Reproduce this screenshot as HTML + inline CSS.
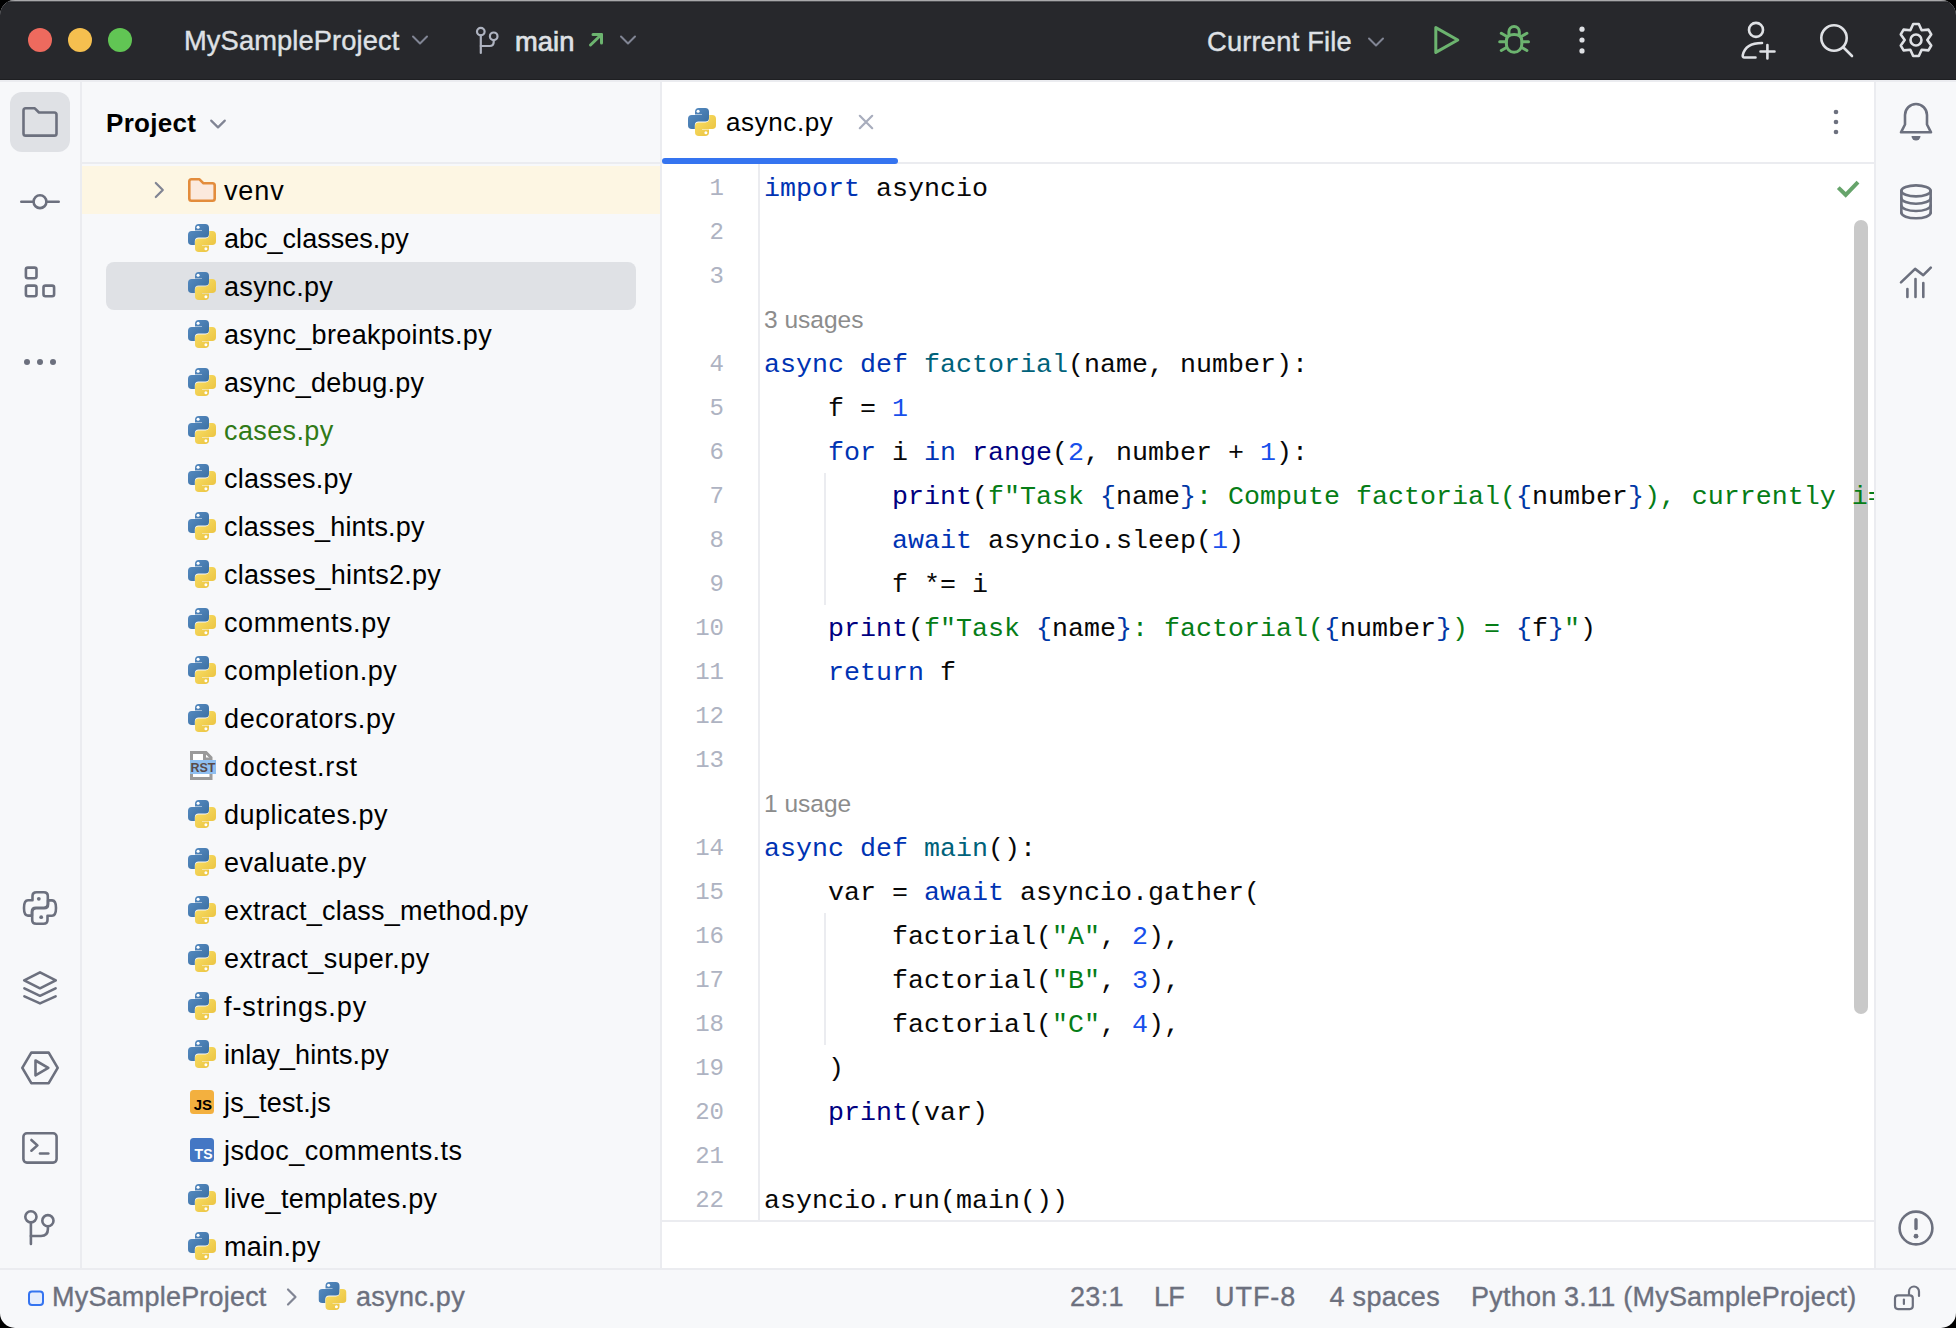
<!DOCTYPE html>
<html><head><meta charset="utf-8"><style>
*{margin:0;padding:0;box-sizing:border-box}
html,body{width:1956px;height:1328px;overflow:hidden;background:#000}
body{font-family:"Liberation Sans", sans-serif;position:relative}
.win{position:absolute;left:0;top:0;width:1956px;height:1328px;border-radius:15px;overflow:hidden;background:#f7f8fa}
.abs{position:absolute}
.t{position:absolute;white-space:pre;font-family:"Liberation Sans", sans-serif}
.code{position:absolute;white-space:pre;font-family:"Liberation Mono", monospace;font-size:26.67px;line-height:44px;color:#080808}
.ln{position:absolute;white-space:pre;font-family:"Liberation Mono", monospace;font-size:24px;line-height:44px;color:#aeb3c2;text-align:right;width:60px}
.kw{color:#0033b3} .fn{color:#00627a} .num{color:#1750eb} .str{color:#067d17} .bi{color:#000080} .br{color:#0037a6}
.rowt{position:absolute;left:224px;font-size:27px;line-height:48px;color:#000;white-space:pre}
.ov{position:absolute;left:0;top:0;width:1956px;height:1328px;overflow:visible}
</style></head>
<body><div class="win">
<div class="abs" style="left:0;top:0;width:1956px;height:80px;background:#27282c"></div>
<div class="abs" style="left:0;top:79px;width:1956px;height:1px;background:#1e1f22"></div>
<div class="abs" style="left:0;top:0;width:1956px;height:1px;background:#a9a9ab"></div>
<div class="abs" style="left:0;top:1px;width:1956px;height:1px;background:#4e4f53"></div>
<div class="abs" style="left:0;top:2px;width:1956px;height:1px;background:#222327"></div>
<div class="abs" style="left:28px;top:28px;width:24px;height:24px;border-radius:50%;background:#ee6a5e"></div>
<div class="abs" style="left:68px;top:28px;width:24px;height:24px;border-radius:50%;background:#f5bf4f"></div>
<div class="abs" style="left:108px;top:28px;width:24px;height:24px;border-radius:50%;background:#61c554"></div>
<div class="t" style="left:184px;top:21px;font-size:27.3px;line-height:40px;color:#dfe1e5;letter-spacing:0.1px;-webkit-text-stroke:0.4px #dfe1e5">MySampleProject</div>
<div class="t" style="left:515px;top:21.5px;font-size:27.3px;line-height:40px;color:#dfe1e5;letter-spacing:0.1px;-webkit-text-stroke:0.7px #dfe1e5">main</div>
<div class="t" style="left:1207px;top:21.5px;font-size:27.3px;line-height:40px;color:#dfe1e5;letter-spacing:0.2px;-webkit-text-stroke:0.4px #dfe1e5">Current File</div>
<div class="abs" style="left:0;top:80px;width:1956px;height:2px;background:#ebecf0"></div>
<div class="abs" style="left:80px;top:80px;width:2px;height:1188px;background:#ebecf0"></div>
<div class="abs" style="left:10px;top:92px;width:60px;height:60px;border-radius:12px;background:#dfe1e5"></div>
<div class="t" style="left:106px;top:99px;font-size:26px;line-height:48px;font-weight:bold;color:#000;letter-spacing:0.3px">Project</div>
<div class="abs" style="left:82px;top:162px;width:578px;height:2px;background:#ebecf0"></div>
<div class="abs" style="left:82px;top:166px;width:578px;height:48px;background:#fdf6e3"></div>
<div class="rowt" style="top:167px;color:#000;letter-spacing:0.867px">venv</div>
<div class="rowt" style="top:215px;color:#000;letter-spacing:0.015px">abc_classes.py</div>
<div class="abs" style="left:106px;top:262px;width:530px;height:48px;border-radius:8px;background:#dfe1e5"></div>
<div class="rowt" style="top:263px;color:#000;letter-spacing:0.329px">async.py</div>
<div class="rowt" style="top:311px;color:#000;letter-spacing:0.342px">async_breakpoints.py</div>
<div class="rowt" style="top:359px;color:#000;letter-spacing:0.254px">async_debug.py</div>
<div class="rowt" style="top:407px;color:#317a17;letter-spacing:0.386px">cases.py</div>
<div class="rowt" style="top:455px;color:#000;letter-spacing:0.256px">classes.py</div>
<div class="rowt" style="top:503px;color:#000;letter-spacing:0.153px">classes_hints.py</div>
<div class="rowt" style="top:551px;color:#000;letter-spacing:0.225px">classes_hints2.py</div>
<div class="rowt" style="top:599px;color:#000;letter-spacing:0.57px">comments.py</div>
<div class="rowt" style="top:647px;color:#000;letter-spacing:0.517px">completion.py</div>
<div class="rowt" style="top:695px;color:#000;letter-spacing:0.625px">decorators.py</div>
<div class="rowt" style="top:743px;color:#000;letter-spacing:0.85px">doctest.rst</div>
<div class="rowt" style="top:791px;color:#000;letter-spacing:0.492px">duplicates.py</div>
<div class="rowt" style="top:839px;color:#000;letter-spacing:0.42px">evaluate.py</div>
<div class="rowt" style="top:887px;color:#000;letter-spacing:0.245px">extract_class_method.py</div>
<div class="rowt" style="top:935px;color:#000;letter-spacing:0.473px">extract_super.py</div>
<div class="rowt" style="top:983px;color:#000;letter-spacing:0.927px">f-strings.py</div>
<div class="rowt" style="top:1031px;color:#000;letter-spacing:0.092px">inlay_hints.py</div>
<div class="rowt" style="top:1079px;color:#000;letter-spacing:0.178px">js_test.js</div>
<div class="rowt" style="top:1127px;color:#000;letter-spacing:0.431px">jsdoc_comments.ts</div>
<div class="rowt" style="top:1175px;color:#000;letter-spacing:0.275px">live_templates.py</div>
<div class="rowt" style="top:1223px;color:#000;letter-spacing:0.267px">main.py</div>
<div class="abs" style="left:660px;top:80px;width:2px;height:1188px;background:#ebecf0"></div>
<div class="abs" style="left:662px;top:82px;width:1212px;height:1186px;background:#fff"></div>
<div class="abs" style="left:662px;top:162px;width:1212px;height:2px;background:#ebecf0"></div>
<div class="abs" style="left:662px;top:158px;width:236px;height:6px;border-radius:3px;background:#3574f0"></div>
<div class="t" style="left:726px;top:98px;font-size:26px;line-height:48px;color:#000;letter-spacing:0.6px">async.py</div>
<div class="abs" style="left:758px;top:164px;width:2px;height:1056px;background:#ebecf0"></div>
<div class="abs" style="left:662px;top:1220px;width:1212px;height:2px;background:#ebecf0"></div>
<div class="abs" style="left:1874px;top:80px;width:2px;height:1188px;background:#ebecf0"></div>
<div class="abs" style="left:1854px;top:220px;width:14px;height:794px;border-radius:7px;background:#c9c9c9"></div>
<div class="abs" style="left:824px;top:473px;width:2px;height:132px;background:#ebecf0"></div>
<div class="abs" style="left:824px;top:913px;width:2px;height:132px;background:#ebecf0"></div>
<div class="abs" style="left:662px;top:164px;width:1212px;height:1056px;overflow:hidden">
<div class="ln" style="left:2px;top:3px">1</div>
<div class="code" style="left:102px;top:3px"><span class="kw">import</span> asyncio</div>
<div class="ln" style="left:2px;top:47px">2</div>
<div class="code" style="left:102px;top:47px"></div>
<div class="ln" style="left:2px;top:91px">3</div>
<div class="code" style="left:102px;top:91px"></div>
<div class="t" style="left:102px;top:134px;font-size:24.5px;line-height:44px;color:#8c8c8c">3 usages</div>
<div class="ln" style="left:2px;top:179px">4</div>
<div class="code" style="left:102px;top:179px"><span class="kw">async</span> <span class="kw">def</span> <span class="fn">factorial</span>(name, number):</div>
<div class="ln" style="left:2px;top:223px">5</div>
<div class="code" style="left:102px;top:223px">    f = <span class="num">1</span></div>
<div class="ln" style="left:2px;top:267px">6</div>
<div class="code" style="left:102px;top:267px">    <span class="kw">for</span> i <span class="kw">in</span> <span class="bi">range</span>(<span class="num">2</span>, number + <span class="num">1</span>):</div>
<div class="ln" style="left:2px;top:311px">7</div>
<div class="code" style="left:102px;top:311px">        <span class="bi">print</span>(<span class="str">f&quot;Task </span><span class="br">{</span>name<span class="br">}</span><span class="str">: Compute factorial(</span><span class="br">{</span>number<span class="br">}</span><span class="str">), currently i=</span><span class="br">{</span>i<span class="br">}</span><span class="str">...&quot;)</span></div>
<div class="ln" style="left:2px;top:355px">8</div>
<div class="code" style="left:102px;top:355px">        <span class="kw">await</span> asyncio.sleep(<span class="num">1</span>)</div>
<div class="ln" style="left:2px;top:399px">9</div>
<div class="code" style="left:102px;top:399px">        f *= i</div>
<div class="ln" style="left:2px;top:443px">10</div>
<div class="code" style="left:102px;top:443px">    <span class="bi">print</span>(<span class="str">f&quot;Task </span><span class="br">{</span>name<span class="br">}</span><span class="str">: factorial(</span><span class="br">{</span>number<span class="br">}</span><span class="str">) = </span><span class="br">{</span>f<span class="br">}</span><span class="str">&quot;</span>)</div>
<div class="ln" style="left:2px;top:487px">11</div>
<div class="code" style="left:102px;top:487px">    <span class="kw">return</span> f</div>
<div class="ln" style="left:2px;top:531px">12</div>
<div class="code" style="left:102px;top:531px"></div>
<div class="ln" style="left:2px;top:575px">13</div>
<div class="code" style="left:102px;top:575px"></div>
<div class="t" style="left:102px;top:618px;font-size:24.5px;line-height:44px;color:#8c8c8c">1 usage</div>
<div class="ln" style="left:2px;top:663px">14</div>
<div class="code" style="left:102px;top:663px"><span class="kw">async</span> <span class="kw">def</span> <span class="fn">main</span>():</div>
<div class="ln" style="left:2px;top:707px">15</div>
<div class="code" style="left:102px;top:707px">    var = <span class="kw">await</span> asyncio.gather(</div>
<div class="ln" style="left:2px;top:751px">16</div>
<div class="code" style="left:102px;top:751px">        factorial(<span class="str">&quot;A&quot;</span>, <span class="num">2</span>),</div>
<div class="ln" style="left:2px;top:795px">17</div>
<div class="code" style="left:102px;top:795px">        factorial(<span class="str">&quot;B&quot;</span>, <span class="num">3</span>),</div>
<div class="ln" style="left:2px;top:839px">18</div>
<div class="code" style="left:102px;top:839px">        factorial(<span class="str">&quot;C&quot;</span>, <span class="num">4</span>),</div>
<div class="ln" style="left:2px;top:883px">19</div>
<div class="code" style="left:102px;top:883px">    )</div>
<div class="ln" style="left:2px;top:927px">20</div>
<div class="code" style="left:102px;top:927px">    <span class="bi">print</span>(var)</div>
<div class="ln" style="left:2px;top:971px">21</div>
<div class="code" style="left:102px;top:971px"></div>
<div class="ln" style="left:2px;top:1015px">22</div>
<div class="code" style="left:102px;top:1015px">asyncio.run(main())</div>
</div>
<div class="abs" style="left:0;top:1268px;width:1956px;height:2px;background:#ebecf0"></div>
<div class="t" style="left:52px;top:1272.5px;font-size:27px;line-height:48px;color:#6c707e;letter-spacing:0.2px;-webkit-text-stroke:0.35px #6c707e">MySampleProject</div>
<div class="t" style="left:356px;top:1272.5px;font-size:27px;line-height:48px;color:#6c707e;letter-spacing:0.3px;-webkit-text-stroke:0.35px #6c707e">async.py</div>
<div class="t" style="left:1070px;top:1272.5px;font-size:27px;line-height:48px;color:#6c707e;letter-spacing:0.3px;-webkit-text-stroke:0.35px #6c707e">23:1</div>
<div class="t" style="left:1154px;top:1272.5px;font-size:27px;line-height:48px;color:#6c707e;letter-spacing:-0.7px;-webkit-text-stroke:0.35px #6c707e">LF</div>
<div class="t" style="left:1215px;top:1272.5px;font-size:27px;line-height:48px;color:#6c707e;letter-spacing:0.95px;-webkit-text-stroke:0.35px #6c707e">UTF-8</div>
<div class="t" style="left:1329.5px;top:1272.5px;font-size:27px;line-height:48px;color:#6c707e;letter-spacing:0.3px;-webkit-text-stroke:0.35px #6c707e">4 spaces</div>
<div class="t" style="left:1471px;top:1272.5px;font-size:27px;line-height:48px;color:#6c707e;letter-spacing:0.22px;-webkit-text-stroke:0.35px #6c707e">Python 3.11 (MySampleProject)</div>
<svg class="ov" width="1956" height="1328" viewBox="0 0 1956 1328"><defs><linearGradient id="pyb" x1="0" y1="0" x2="1" y2="1"><stop offset="0" stop-color="#5a8fc6"/><stop offset="1" stop-color="#366a9c"/></linearGradient><linearGradient id="pyy" x1="0" y1="0" x2="1" y2="1"><stop offset="0" stop-color="#e8be3a"/><stop offset="1" stop-color="#fbe26a"/></linearGradient><symbol id="py" viewBox="0 0 28 28"><path d="M14 6.6H7V3.8Q7 0 10.8 0H17.2Q21 0 21 3.8V10Q21 13.6 17.4 13.6H10.6Q6.8 13.6 6.8 17.4V21H3.8Q0 21 0 17.2V10.8Q0 7 3.8 7H14Z" fill="url(#pyb)"/><path d="M14 6.6H7V3.8Q7 0 10.8 0H17.2Q21 0 21 3.8V10Q21 13.6 17.4 13.6H10.6Q6.8 13.6 6.8 17.4V21H3.8Q0 21 0 17.2V10.8Q0 7 3.8 7H14Z" fill="url(#pyy)" transform="rotate(180 14 14)"/><circle cx="10.1" cy="3.3" r="1.5" fill="#fff"/><circle cx="17.9" cy="24.7" r="1.5" fill="#fff"/></symbol></defs><g fill="none" stroke="#818594" stroke-width="2" stroke-linecap="round" stroke-linejoin="round"><polyline points="413,36.5 420,43.5 427,36.5"/><polyline points="621,36.5 628,43.5 635,36.5"/><polyline points="1369,38.5 1376,45.5 1383,38.5"/></g><g fill="none" stroke="#aeb3c0" stroke-width="2.2" stroke-linecap="round"><circle cx="480.8" cy="31.6" r="3.8"/><circle cx="493.7" cy="36.3" r="3.8"/><path d="M480.8 35.4V53"/><path d="M493.7 40.1V42Q493.7 46 489.7 46H480.8"/></g><g fill="none" stroke="#6cb46f" stroke-width="3" stroke-linecap="round" stroke-linejoin="round"><path d="M590.5 45L601.5 34.5"/><path d="M593 34.5H601.5V43"/></g><g fill="none" stroke="#6cb46f" stroke-width="3" stroke-linecap="round" stroke-linejoin="round"><path d="M1435.8 27.6L1457.8 40L1435.8 52.4Z"/><path d="M1506.4 41Q1506.4 34.4 1514.1 34.4Q1521.8 34.4 1521.8 41V44.5A7.7 7.8 0 0 1 1506.4 44.5Z"/><path d="M1508.9 34.4V31.7A5.2 5.2 0 0 1 1519.3 31.7V34.4"/><path d="M1501.3 33.3L1506.5 36.3M1499.7 41.8H1506M1501.3 50.5L1506.5 47.5M1526.9 33.3L1521.7 36.3M1528.5 41.8H1522.2M1526.9 50.5L1521.7 47.5"/></g><g fill="#dfe1e5"><circle cx="1582" cy="29.2" r="2.6"/><circle cx="1582" cy="40" r="2.6"/><circle cx="1582" cy="50.9" r="2.6"/></g><g fill="none" stroke="#dfe1e5" stroke-width="2.6" stroke-linecap="round" stroke-linejoin="round"><circle cx="1756" cy="29.9" r="7"/><path d="M1755.5 57.5H1744.5Q1742.3 57.5 1742.8 55Q1745.5 43 1762 43"/><path d="M1767.4 45V58.5M1760.5 51.5H1774.5"/><circle cx="1834" cy="38" r="12.7"/><path d="M1843.5 47.5L1852 56"/><polygon points="1913.19,24.05 1918.81,24.05 1921.65,30.21 1928.41,29.59 1931.22,34.46 1927.30,40.00 1931.22,45.54 1928.41,50.41 1921.65,49.79 1918.81,55.95 1913.19,55.95 1910.35,49.79 1903.59,50.41 1900.78,45.54 1904.70,40.00 1900.78,34.46 1903.59,29.59 1910.35,30.21"/><circle cx="1916" cy="40" r="5.5"/></g><g fill="none" stroke="#6c707e" stroke-width="2.6" stroke-linecap="round" stroke-linejoin="round"><path d="M23.5 110.5Q23.5 108.3 25.7 108.3H34.8L39 112.5H54.3Q56.5 112.5 56.5 114.7V133.4Q56.5 135.6 54.3 135.6H25.7Q23.5 135.6 23.5 133.4Z"/><path d="M21.3 201.7H32.5M47.5 201.7H58.7"/><circle cx="40" cy="201.7" r="6.4"/><rect x="25.9" y="267.6" width="10.6" height="10.6" rx="2"/><rect x="25.9" y="285.6" width="10.6" height="10.6" rx="2"/><rect x="43.5" y="285.6" width="10.6" height="10.6" rx="2"/><path d="M32.5 900.3V896Q32.5 892.2 36.5 892.2H43.8Q47.8 892.2 47.8 896V903.7Q47.8 907.7 43.8 907.7H35.9Q31.9 907.7 31.9 911.7V915.6H28Q24 915.6 24 908Q24 900.3 28 900.3Z"/><path d="M32.5 900.3V896Q32.5 892.2 36.5 892.2H43.8Q47.8 892.2 47.8 896V903.7Q47.8 907.7 43.8 907.7H35.9Q31.9 907.7 31.9 911.7V915.6H28Q24 915.6 24 908Q24 900.3 28 900.3Z" transform="rotate(180 40 908)"/><path d="M24.2 980.4L40 972.4L55.8 980.4L40 988.3Z"/><path d="M24.4 988.4L40 995.8L55.6 988.4"/><path d="M24.4 996.4L40 1003.4L55.6 996.4"/><path d="M31.3 1052.6H48.7L57.7 1067.9L48.7 1083.2H31.3L22.3 1067.9Z"/><path d="M35.5 1060.5L48.3 1067.9L35.5 1075.3Z"/><rect x="23.4" y="1133.3" width="33.2" height="29.3" rx="3.5"/><path d="M31.4 1140L37.4 1145.4L31.4 1150.7"/><path d="M40 1153.5H48.3"/><circle cx="30.9" cy="1216.8" r="5.6"/><circle cx="47.9" cy="1220.7" r="5.6"/><path d="M30.9 1222.4V1244"/><path d="M47.9 1226.3V1229Q47.9 1236 41 1236H30.9"/></g><g fill="#6c707e"><circle cx="27" cy="362" r="3"/><circle cx="40" cy="362" r="3"/><circle cx="53" cy="362" r="3"/><circle cx="38.8" cy="898.8" r="1.9"/><circle cx="41.2" cy="917.2" r="1.9"/></g><g fill="none" stroke="#6c707e" stroke-width="2.6" stroke-linecap="round" stroke-linejoin="round"><path d="M1901 132.3H1931L1927 124.5V115A11 11 0 0 0 1905 115V124.5Z"/><ellipse cx="1916" cy="190.9" rx="14.65" ry="5.5"/><path d="M1901.35 190.9V212.8M1930.65 190.9V212.8"/><path d="M1901.35 198.2A14.65 5.5 0 0 0 1930.65 198.2"/><path d="M1901.35 205.5A14.65 5.5 0 0 0 1930.65 205.5"/><path d="M1901.35 212.8A14.65 5.5 0 0 0 1930.65 212.8"/><path d="M1901 282.4L1915.1 268.9L1923.3 275.2L1930.8 267.6"/><path d="M1907.4 289V297M1915.5 279V297M1923.3 283V297"/><circle cx="1916" cy="1228" r="16.4"/><path d="M1916 1219.8V1228.6" stroke-width="3.4"/></g><g fill="#6c707e"><path d="M1911.5 136A4.5 4.5 0 0 0 1920.5 136Z"/><circle cx="1916" cy="1236.2" r="2.4"/></g><g fill="none" stroke="#818594" stroke-width="2.2" stroke-linecap="round" stroke-linejoin="round"><polyline points="211.2,120.6 218,127.4 224.8,120.6"/><polyline points="155.8,183 162.8,190 155.8,197"/><polyline points="288,1289.5 295.5,1297 288,1304.5"/></g><path d="M189.3 181.5Q189.3 179.3 191.5 179.3H199.5L203.5 183.3H212.5Q214.7 183.3 214.7 185.5V198.5Q214.7 200.7 212.5 200.7H191.5Q189.3 200.7 189.3 198.5Z" fill="#fbe9dd" stroke="#e38c3c" stroke-width="2.6" stroke-linejoin="round"/><use href="#py" x="188" y="224" width="28" height="28"/><use href="#py" x="188" y="272" width="28" height="28"/><use href="#py" x="188" y="320" width="28" height="28"/><use href="#py" x="188" y="368" width="28" height="28"/><use href="#py" x="188" y="416" width="28" height="28"/><use href="#py" x="188" y="464" width="28" height="28"/><use href="#py" x="188" y="512" width="28" height="28"/><use href="#py" x="188" y="560" width="28" height="28"/><use href="#py" x="188" y="608" width="28" height="28"/><use href="#py" x="188" y="656" width="28" height="28"/><use href="#py" x="188" y="704" width="28" height="28"/><path d="M191.5 752.5H206L211 757.5V778.5H191.5Z" fill="#fff" stroke="#9a9a9a" stroke-width="3"/><path d="M204.5 753V759H210.5" fill="none" stroke="#9a9a9a" stroke-width="3"/><rect x="190" y="760" width="26" height="14" fill="#8fbff0"/><text x="203" y="771.5" font-family="Liberation Sans" font-size="12.5" font-weight="bold" fill="#5a4a48" text-anchor="middle">RST</text><use href="#py" x="188" y="800" width="28" height="28"/><use href="#py" x="188" y="848" width="28" height="28"/><use href="#py" x="188" y="896" width="28" height="28"/><use href="#py" x="188" y="944" width="28" height="28"/><use href="#py" x="188" y="992" width="28" height="28"/><use href="#py" x="188" y="1040" width="28" height="28"/><rect x="190" y="1090" width="24" height="24" rx="3.5" fill="#f3b03f"/><text x="212" y="1109.5" font-family="Liberation Sans" font-size="15" font-weight="bold" fill="#000" text-anchor="end">JS</text><rect x="190" y="1138" width="24" height="24" rx="3.5" fill="#4477c4"/><text x="212.5" y="1159" font-family="Liberation Sans" font-size="14" font-weight="bold" fill="#fff" text-anchor="end">TS</text><use href="#py" x="188" y="1184" width="28" height="28"/><use href="#py" x="188" y="1232" width="28" height="28"/><use href="#py" x="688" y="108" width="28" height="28"/><g stroke="#a8adbd" stroke-width="2.2" stroke-linecap="round"><path d="M859.8 115.8L872.2 128.2M872.2 115.8L859.8 128.2"/></g><g fill="#6c707e"><circle cx="1836" cy="112" r="2.3"/><circle cx="1836" cy="122" r="2.3"/><circle cx="1836" cy="132" r="2.3"/></g><path d="M1838.3 187.6L1845.7 194.8L1858 182.2" fill="none" stroke="#66a46b" stroke-width="4"/><rect x="29" y="1291.5" width="14" height="13.5" rx="3" fill="#e6edfc" stroke="#3574f0" stroke-width="2"/><use href="#py" x="318.5" y="1282" width="28" height="28"/><g fill="none" stroke="#6c707e" stroke-width="2.2" stroke-linecap="round" stroke-linejoin="round"><rect x="1895" y="1295.3" width="17.8" height="13.8" rx="3"/><path d="M1909 1295V1291.5A5 5 0 0 1 1919 1291.5V1296"/><path d="M1903.9 1299.5V1304"/></g></svg>
</div></body></html>
